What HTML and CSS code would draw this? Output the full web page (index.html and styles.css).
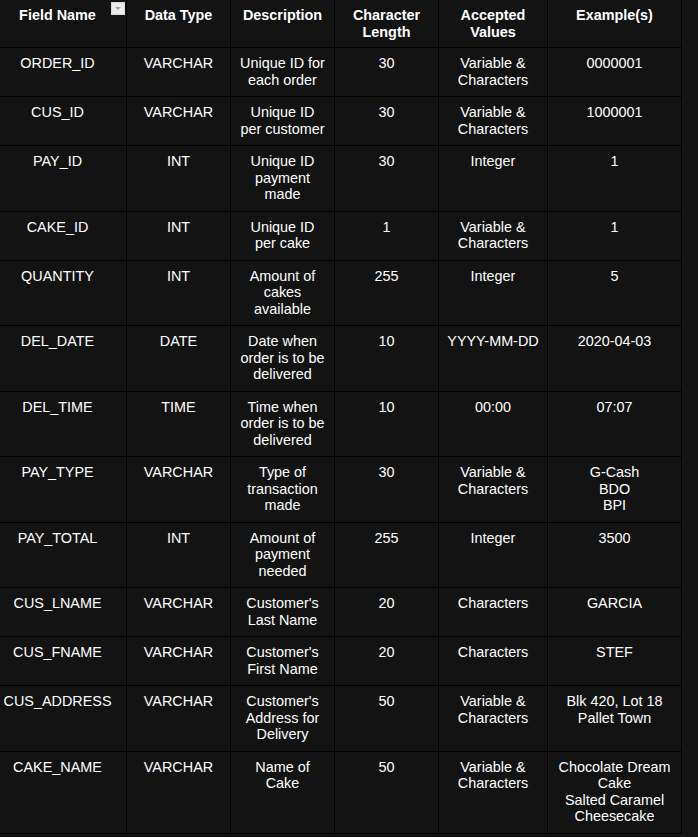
FILE: index.html
```html
<!DOCTYPE html>
<html lang="en">
<head>
<meta charset="utf-8">
<title>Data Dictionary</title>
<link rel="stylesheet" href="styles.css">
</head>
<body>
<table class="dict">
  <colgroup>
    <col class="c1"><col class="c2"><col class="c3"><col class="c4"><col class="c5"><col class="c6">
  </colgroup>
  <thead>
    <tr>
      <th class="has-filter">Field Na<span class="caret"></span>me<span class="filter"><svg width="14" height="13" viewBox="0 0 14 13"><rect x="0.5" y="0.5" width="13" height="12" fill="#ececec" stroke="#d8d8d8"/><path d="M4 5h6l-3 3z" fill="#a8a8a8"/></svg></span></th>
      <th>Data Type</th>
      <th>Description</th>
      <th>Character Length</th>
      <th>Accepted Values</th>
      <th>Example(s)</th>
    </tr>
  </thead>
  <tbody>
    <tr><td>ORDER_ID</td><td>VARCHAR</td><td>Unique ID for each order</td><td>30</td><td>Variable &amp; Characters</td><td>0000001</td></tr>
    <tr><td>CUS_ID</td><td>VARCHAR</td><td>Unique ID per customer</td><td>30</td><td>Variable &amp; Characters</td><td>1000001</td></tr>
    <tr><td>PAY_ID</td><td>INT</td><td>Unique ID payment made</td><td>30</td><td>Integer</td><td>1</td></tr>
    <tr><td>CAKE_ID</td><td>INT</td><td>Unique ID per cake</td><td>1</td><td>Variable &amp; Characters</td><td>1</td></tr>
    <tr><td>QUANTITY</td><td>INT</td><td>Amount of cakes available</td><td>255</td><td>Integer</td><td>5</td></tr>
    <tr><td>DEL_DATE</td><td>DATE</td><td>Date when order is to be delivered</td><td>10</td><td class="nowrap">YYYY-MM-DD</td><td>2020-04-03</td></tr>
    <tr><td>DEL_TIME</td><td>TIME</td><td>Time when order is to be delivered</td><td>10</td><td>00:00</td><td>07:07</td></tr>
    <tr><td>PAY_TYPE</td><td>VARCHAR</td><td>Type of transaction made</td><td>30</td><td>Variable &amp; Characters</td><td>G-Cash<br>BDO<br>BPI</td></tr>
    <tr><td>PAY_TOTAL</td><td>INT</td><td>Amount of payment needed</td><td>255</td><td>Integer</td><td>3500</td></tr>
    <tr><td>CUS_LNAME</td><td>VARCHAR</td><td>Customer's Last Name</td><td>20</td><td>Characters</td><td>GARCIA</td></tr>
    <tr><td>CUS_FNAME</td><td>VARCHAR</td><td>Customer's First Name</td><td>20</td><td>Characters</td><td>STEF</td></tr>
    <tr><td>CUS_ADDRESS</td><td>VARCHAR</td><td>Customer's Address for Delivery</td><td>50</td><td>Variable &amp; Characters</td><td>Blk 420, Lot 18 Pallet Town</td></tr>
    <tr><td>CAKE_NAME</td><td>VARCHAR</td><td>Name of Cake</td><td>50</td><td>Variable &amp; Characters</td><td>Chocolate Dream Cake<br>Salted Caramel Cheesecake</td></tr>
  </tbody>
</table>
</body>
</html>
```
FILE: styles.css
```css
html, body {
  margin: 0;
  padding: 0;
  background: #131313;
}

body {
  font-family: "Liberation Sans", Arial, sans-serif;
  font-size: 14.4px;
  line-height: 16.5px;
  color: #ffffff;
}

.dict {
  table-layout: fixed;
  border-collapse: separate;
  border-spacing: 0;
  width: 693px;
  margin-left: -11px;
}

.c1 { width: 138px; }
.c2 { width: 104px; }
.c3 { width: 104px; }
.c4 { width: 104px; }
.c5 { width: 109px; }
.c6 { width: 134px; }

.dict th,
.dict td {
  box-sizing: border-box;
  border-right: 1px solid #000;
  border-bottom: 1px solid #000;
  text-align: center;
  vertical-align: top;
  padding: 7px 9px 8px;
  overflow-wrap: normal;
}

.dict td.nowrap {
  white-space: nowrap;
  padding-left: 0;
  padding-right: 0;
}

.dict th {
  font-weight: bold;
  padding-bottom: 7px;
}

.has-filter {
  position: relative;
}

.filter {
  position: absolute;
  top: 2px;
  right: 1px;
  width: 14px;
  height: 13px;
  line-height: 0;
}

.caret {
  display: inline-block;
  width: 1px;
  height: 16px;
  margin: 0 -0.5px;
  vertical-align: -4px;
  background: #000;
}
```
